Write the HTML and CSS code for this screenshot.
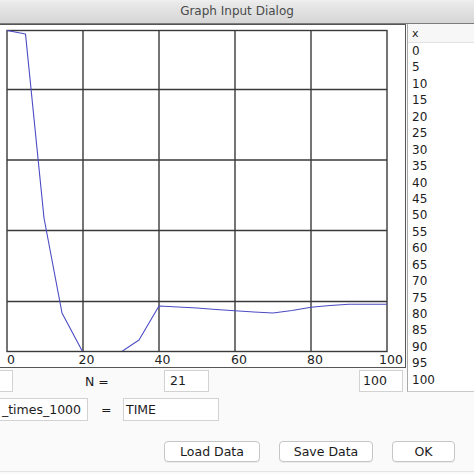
FILE: index.html
```html
<!DOCTYPE html>
<html>
<head>
<meta charset="utf-8">
<link rel="stylesheet" href="styles.css">
</head>
<body>
<div class="window">
  <div class="titlebar">Graph Input Dialog</div>
  <div class="upper">
    <div class="leftcol">
      <div class="graph-panel">
        <svg class="plot" width="405" height="342" viewBox="0 0 405 342">
          <defs>
            <clipPath id="plotclip"><rect x="7" y="5" width="380" height="321"/></clipPath>
          </defs>
          <g class="grid">
            <rect x="7" y="5.5" width="380" height="321" fill="none"/>
            <line x1="83" y1="5" x2="83" y2="327"/>
            <line x1="159" y1="5" x2="159" y2="327"/>
            <line x1="235" y1="5" x2="235" y2="327"/>
            <line x1="311" y1="5" x2="311" y2="327"/>
            <line x1="7" y1="64.5" x2="387" y2="64.5"/>
            <line x1="7" y1="135" x2="387" y2="135"/>
            <line x1="7" y1="205.5" x2="387" y2="205.5"/>
            <line x1="7" y1="276.5" x2="387" y2="276.5"/>
          </g>
          <polyline class="series" clip-path="url(#plotclip)" points="7,5.5 25.5,9 44,193 62,288 82.5,326.5 102,380 121,327 139,315 159,281 178,282 197,283 216,284.5 235,285.7 254,287 273,288 292,285.5 311,282.3 330,280.5 349,279.3 368,279.3 387,279.3"/>
          <g class="axis-labels">
            <text x="7" y="339">0</text>
            <text x="78.5" y="339">20</text>
            <text x="154.5" y="339">40</text>
            <text x="231" y="339">60</text>
            <text x="307" y="339">80</text>
            <text x="379" y="339">100</text>
          </g>
        </svg>
      </div>
      <div class="row row-n">
        <div class="field field-left"></div>
        <span class="label label-n">N =</span>
        <div class="field field-n">21</div>
        <div class="field field-max">100</div>
      </div>
    </div>
    <div class="xlist">
      <div class="xlist-head">x</div>
      <div class="xlist-item">0</div>
      <div class="xlist-item">5</div>
      <div class="xlist-item">10</div>
      <div class="xlist-item">15</div>
      <div class="xlist-item">20</div>
      <div class="xlist-item">25</div>
      <div class="xlist-item">30</div>
      <div class="xlist-item">35</div>
      <div class="xlist-item">40</div>
      <div class="xlist-item">45</div>
      <div class="xlist-item">50</div>
      <div class="xlist-item">55</div>
      <div class="xlist-item">60</div>
      <div class="xlist-item">65</div>
      <div class="xlist-item">70</div>
      <div class="xlist-item">75</div>
      <div class="xlist-item">80</div>
      <div class="xlist-item">85</div>
      <div class="xlist-item">90</div>
      <div class="xlist-item">95</div>
      <div class="xlist-item">100</div>
    </div>
  </div>
  <div class="row row-var">
    <div class="field field-var">_times_1000</div>
    <span class="label label-eq">=</span>
    <div class="field field-time">TIME</div>
  </div>
  <div class="buttons">
    <button class="btn btn-load">Load Data</button>
    <button class="btn btn-save">Save Data</button>
    <button class="btn btn-ok">OK</button>
  </div>
  <div class="bottom-rule"></div>
</div>
</body>
</html>
```

FILE: styles.css
```css
* { box-sizing: border-box; }

html, body {
  margin: 0;
  padding: 0;
}

body {
  width: 474px;
  height: 474px;
  overflow: hidden;
  background: #fafafa;
  font-family: "DejaVu Sans", "Noto Sans", sans-serif;
  font-size: 12.5px;
  color: #1c1c1c;
}

.window {
  width: 474px;
  height: 474px;
  overflow: hidden;
}

.titlebar {
  height: 24px;
  line-height: 23px;
  text-align: center;
  font-size: 12px;
  color: #4a4a4a;
  background: linear-gradient(#efefef 0px, #e8e8e8 4px, #d6d6d6 23px);
  border-bottom: 1px solid #7c7c7c;
}

.upper {
  display: flex;
  align-items: flex-start;
}

.leftcol {
  width: 406px;
  flex: none;
}

.graph-panel {
  width: 406px;
  height: 344px;
  background: #ffffff;
  border-top: 1px solid #555555;
  border-right: 1px solid #555555;
  border-bottom: 1px solid #555555;
}

.plot {
  display: block;
}

.grid rect,
.grid line {
  stroke: #3a3a3a;
  stroke-width: 1.4;
}

.series {
  fill: none;
  stroke: #4b4bc4;
  stroke-width: 1.1;
  stroke-linejoin: round;
}

.axis-labels text {
  font-family: "DejaVu Sans", sans-serif;
  font-size: 12.5px;
  fill: #222222;
}

.row {
  display: flex;
  align-items: center;
}

.field {
  flex: none;
  background: #ffffff;
  border: 1px solid #d2d2d2;
  padding: 0 5px;
  white-space: nowrap;
  overflow: hidden;
}

.label {
  flex: none;
  white-space: nowrap;
}

.row-n {
  margin-top: 2px;
  height: 22px;
}

.row-n .field {
  height: 22px;
  line-height: 20px;
}

.field-left {
  margin-left: -40px;
  width: 53px;
}

.label-n {
  margin-left: 72px;
  width: 79px;
}

.field-n {
  width: 45px;
}

.field-max {
  margin-left: 150px;
  width: 44px;
  padding-left: 3px;
}

.xlist {
  flex: none;
  margin-left: 1px;
  width: 67px;
  height: 368px;
  background: #ffffff;
  border-left: 1px solid #a9a9a9;
  border-bottom: 1px solid #c9c9c9;
  font-size: 12px;
}

.xlist-head {
  height: 19px;
  line-height: 19px;
  padding-left: 4px;
  font-size: 11px;
  background: #f7f7f7;
  border-bottom: 1px solid #e2e2e2;
}

.xlist-item {
  height: 16.45px;
  line-height: 16.45px;
  padding-left: 4px;
}

.row-var {
  margin-top: 6px;
  height: 23px;
}

.row-var .field {
  height: 23px;
  line-height: 21px;
}

.field-var {
  margin-left: -40px;
  width: 128px;
  text-align: right;
  padding-right: 6px;
}

.label-eq {
  margin-left: 13px;
  width: 22px;
}

.field-time {
  width: 96px;
  padding-left: 2px;
}

.buttons {
  display: flex;
  gap: 19px;
  padding-left: 164px;
  margin-top: 20px;
  height: 21px;
}

.btn {
  flex: none;
  height: 21px;
  padding: 0;
  margin: 0;
  font-family: "DejaVu Sans", sans-serif;
  font-size: 12.5px;
  color: #1a1a1a;
  background: #ffffff;
  border: 1px solid #c6c6c6;
  border-radius: 4px;
  box-shadow: 0 1px 0 rgba(0, 0, 0, 0.06);
  line-height: 19px;
}

.btn-load { width: 96px; }
.btn-save { width: 94px; }
.btn-ok { width: 63px; }

.bottom-rule {
  margin-top: 9px;
  height: 1px;
  background: #e3e3e3;
}
```
